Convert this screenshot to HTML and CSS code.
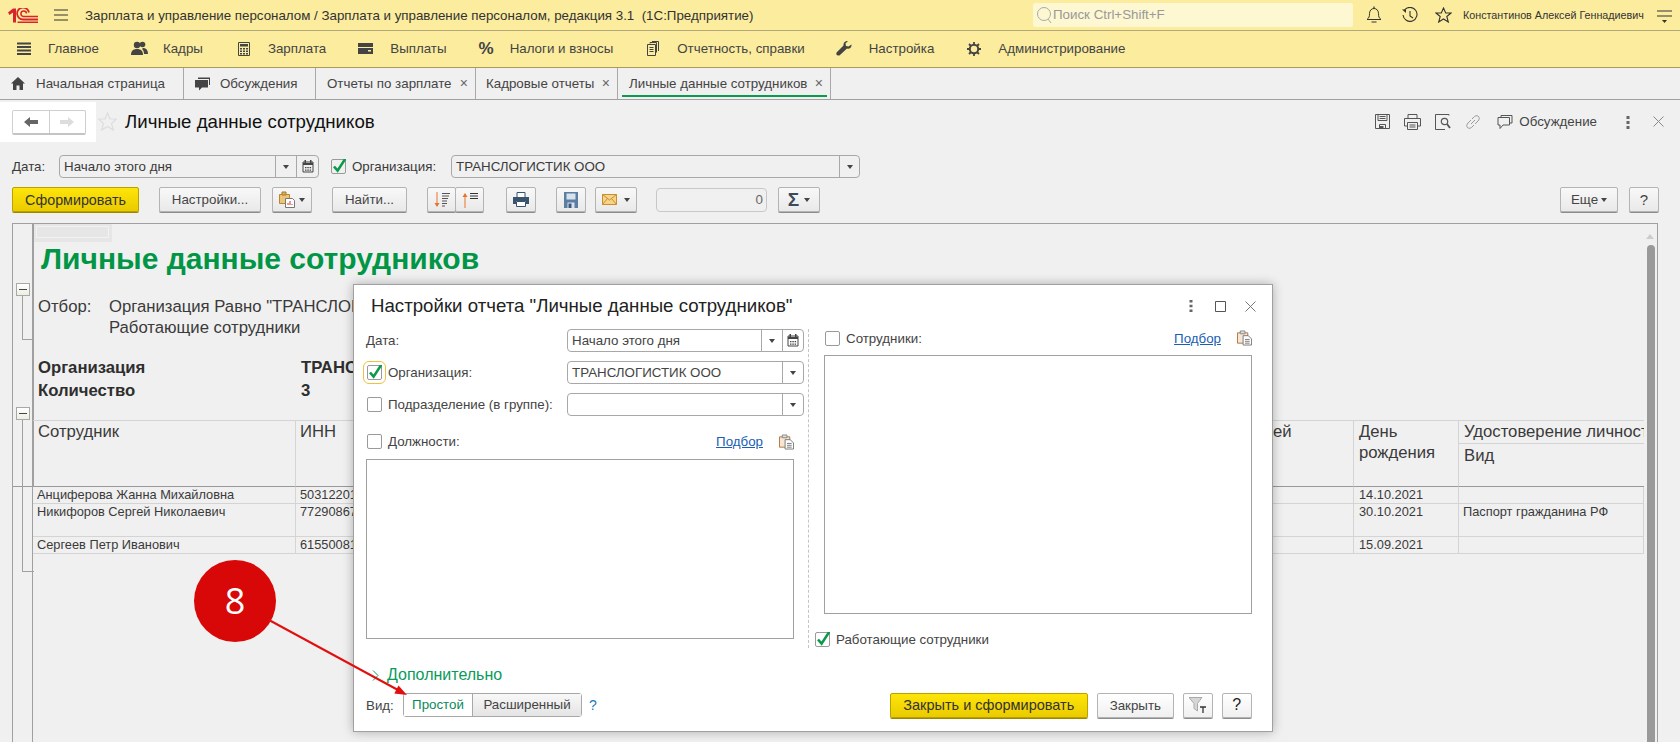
FILE: index.html
```html
<!DOCTYPE html>
<html lang="ru">
<head>
  <meta charset="UTF-8">
  <title>Личные данные сотрудников</title>
  <link rel="stylesheet" href="styles.css">
</head>
<body>
  <svg width="0" height="0" class="defs">
    <symbol id="check" viewBox="0 0 15 15"><path d="M3 7.500l3.600 4.200L14.500-.5" fill="none" stroke="#0a9a4a" stroke-width="2.600"/></symbol>
    <symbol id="clip" viewBox="0 0 16 16"><path d="M.5 2.500h11v11H.500z" fill="#f6e7d4" stroke="#b0703a"/><path d="M3.500 .5h5v3h-5z" fill="#ddd" stroke="#888"/><path d="M6.500 5.500h5.500l3.500 3.500v6.500h-9z" fill="#fff" stroke="#777"/><path d="M8.500 9.500h5M8.500 11.500h5M8.500 13.500h5" stroke="#777"/></symbol>
    <symbol id="chat" viewBox="0 0 16 16"><path d="M4 3V1.500h11V9h-2" fill="none" stroke="currentColor"/><path d="M1 3.500h11.500V11H6l-3 3.500V11H1z" fill="none" stroke="currentColor"/></symbol>
  </svg>

  <header class="topbar">
    <svg class="logo" width="30" height="15" viewBox="0 0 30 15"><path d="M0 4.500L5 .5h3V14.500H5V4.500L1.500 7z" fill="#d8252b"/><path d="M21 4.500A6 6 0 1 0 15 11.500h15" fill="none" stroke="#d8252b" stroke-width="1.800"/><path d="M18.500 5.500A2.800 2.800 0 1 0 15.500 8.500H30M9.500 14.200H30" fill="none" stroke="#d8252b" stroke-width="1.500"/></svg>
    <svg class="burger" width="14" height="12" viewBox="0 0 14 12"><path d="M0 1h14M0 6h14M0 11h14" stroke="#333"/></svg>
    <div class="app-title">Зарплата и управление персоналом / Зарплата и управление персоналом, редакция 3.1&nbsp; (1С:Предприятие)</div>
    <div class="search">
      <svg width="16" height="18" viewBox="0 0 16 18"><circle cx="8" cy="8" r="6.500" fill="none" stroke="#aaa"/><path d="M12 13l3 4" stroke="#aaa"/></svg>
      <span>Поиск Ctrl+Shift+F</span>
    </div>
    <svg class="tool bell" width="16" height="18" viewBox="0 0 16 18"><path d="M1 13.500c2-1.500 2.500-3 2.500-6 0-3 2-5 4.500-5s4.500 2 4.500 5c0 3 .5 4.500 2.500 6z" fill="none" stroke="#333"/><path d="M5.500 16h5M8 .5v2" stroke="#333" stroke-width="1.200"/></svg>
    <svg class="tool hist" width="17" height="16" viewBox="0 0 17 16"><path d="M3.500 3A7 7 0 1 1 2 8" fill="none" stroke="#333" stroke-width="1.100"/><path d="M1 2.500h4v3.500z" fill="#333"/><path d="M9 4v5l3 2" fill="none" stroke="#333" stroke-width="1.100"/></svg>
    <svg class="tool star" width="17" height="16" viewBox="0 0 17 16"><path d="M8.500 1l2.200 5h5.300l-4.200 3.500 1.500 5.500-4.800-3-4.800 3 1.500-5.500L1 6h5.300z" fill="none" stroke="#333" stroke-width="1.100"/></svg>
    <div class="user">Константинов Алексей Геннадиевич</div>
    <svg class="user-menu" width="15" height="14" viewBox="0 0 15 14"><path d="M0 1h15M0 6h15" stroke="#333"/><path d="M5 10h5l-2.500 3z" fill="#333"/></svg>
  </header>

  <nav class="sections">
    <a class="section s1"><svg width="14" height="14" viewBox="0 0 14 14"><path d="M0 1.500h14M0 5h14M0 8.500h14M0 12h14" stroke="#444" stroke-width="1.800"/></svg><span>Главное</span></a>
    <a class="section s2"><svg width="17" height="15" viewBox="0 0 17 15"><circle cx="6" cy="4" r="3.200" fill="#444"/><circle cx="11.500" cy="3.500" r="2.800" fill="#444"/><path d="M0 14c0-4 2-6 6-6s6 2 6 6zM12 7c3 0 5 2 5 6h-4c0-2-.5-4-2-5z" fill="#444"/></svg><span>Кадры</span></a>
    <a class="section s3"><svg width="12" height="14" viewBox="0 0 12 14"><path d="M.5.500h11v13H.500z" fill="none" stroke="#444"/><path d="M2 2h8v2.500H2zM2 6h2v1.500H2zM5 6h2v1.500H5zM8 6h2v1.500H8zM2 8.500h2V10H2zM5 8.500h2V10H5zM8 8.500h2V10H8zM2 11h2v1.500H2zM5 11h2v1.500H5zM8 11h2v1.500H8z" fill="#444"/></svg><span>Зарплата</span></a>
    <a class="section s4"><svg width="15" height="11" viewBox="0 0 15 11"><path d="M0 0h15v4H0zM0 5h15v6H0z" fill="#444"/><path d="M10 7h3v1.500h-3z" fill="#fbec9e"/></svg><span>Выплаты</span></a>
    <a class="section s5"><span class="pct">%</span><span>Налоги и взносы</span></a>
    <a class="section s6"><svg width="12" height="15" viewBox="0 0 12 15"><path d="M.5 3.500h8v11h-8z" fill="none" stroke="#444"/><path d="M3 2.500V1.500h6.500v10M5 .5h6.500V10M2.500 6.500h4M2.500 8.500h4M2.500 10.500h4" fill="none" stroke="#444"/></svg><span>Отчетность, справки</span></a>
    <a class="section s7"><svg width="16" height="15" viewBox="0 0 16 15"><path d="M15.500 3.500c.5 2.500-2 5-4.500 4L4 14c-1 1-3 .5-3.500-.5S.5 11.500 1 11l6.500-6.500C7 2 9.500-.5 12 0L9.500 2.500 10 5l2.500.5z" fill="#444"/></svg><span>Настройка</span></a>
    <a class="section s8"><svg width="14" height="14" viewBox="0 0 14 14"><circle cx="7" cy="7" r="4.200" fill="none" stroke="#444" stroke-width="2"/><path d="M7 0v3M7 11v3M0 7h3M11 7h3M2 2l2 2M10 10l2 2M12 2l-2 2M4 10l-2 2" stroke="#444" stroke-width="1.800"/></svg><span>Администрирование</span></a>
  </nav>

  <div class="tabs">
    <a class="tab t-home"><svg width="14" height="13" viewBox="0 0 14 13"><path d="M7 0l7 6.500h-2V13H8.500V8.500h-3V13H2V6.500H0z" fill="#444"/></svg><span>Начальная страница</span></a>
    <a class="tab t-chat"><svg width="16" height="15" viewBox="0 0 16 15"><path d="M3 1.500h12V9h-1V3H3zM0 4h13v7.500H7l-3 3v-3H0z" fill="#444"/></svg><span>Обсуждения</span></a>
    <a class="tab t-pay"><span>Отчеты по зарплате</span><i class="tab-x">×</i></a>
    <a class="tab t-staff"><span>Кадровые отчеты</span><i class="tab-x">×</i></a>
    <a class="tab t-active"><span>Личные данные сотрудников</span><i class="tab-x">×</i></a>
  </div>

  <main class="form">
    <div class="form-head">
      <div class="nav-patch">
        <div class="nav-btns">
          <span class="nav-btn"><svg width="14" height="10" viewBox="0 0 14 10"><path d="M0 5l6-5v3h8v4H6v3z" fill="#666"/></svg></span>
          <span class="nav-btn"><svg width="14" height="10" viewBox="0 0 14 10"><path d="M14 5L8 0v3H0v4h8v3z" fill="#ddd"/></svg></span>
        </div>
      </div>
      <svg class="fav" width="19" height="19" viewBox="0 0 19 19"><path d="M9.500 1l2.500 6h6.500l-5 4.500 1.800 6.500-5.800-3.600L3.700 18l1.800-6.500-5-4.500H7z" fill="none" stroke="#ddd" stroke-width="1.200"/></svg>
      <h2 class="form-title">Личные данные сотрудников</h2>
      <div class="head-tools">
        <svg width="15" height="15" viewBox="0 0 15 15"><path d="M.5.500h14v14H.5zM3 .5v6h9v-6M4.500 10.500h6v4h-6z" fill="none" stroke="#555"/><path d="M4.500 2.500h6M4.500 4.500h6" stroke="#555"/><path d="M4.500 12h4v2.500h-4z" fill="#555"/></svg>
        <svg width="17" height="16" viewBox="0 0 17 16"><path d="M4 4.500V.5h9v4M3.500 12H.5V4.500h16V12h-3" fill="none" stroke="#555"/><path d="M3.500 8.500h10v7h-10zM5.500 11h6M5.500 13h6" fill="none" stroke="#555"/></svg>
        <svg width="17" height="16" viewBox="0 0 17 16"><path d="M14 1.500V.5H.5v15H10" fill="none" stroke="#555"/><circle cx="9.500" cy="7.500" r="3.200" fill="none" stroke="#555" stroke-width="1.200"/><path d="M12 10l3 4" stroke="#555" stroke-width="1.800"/></svg>
        <svg class="head-link" width="16" height="16" viewBox="0 0 16 16"><path d="M6 6L3 9c-3 3 0 7 3.500 4.500L9 11M10 10l3-3c3-3 0-7-3.500-4.500L7 5M6 10l4-4" fill="none" stroke="#999"/></svg>
        <svg class="head-chat" width="16" height="16"><use href="#chat"/></svg>
        <span class="discuss">Обсуждение</span>
        <svg class="dots" width="4" height="14" viewBox="0 0 4 14"><path d="M.5 1h3v3h-3zM.5 6h3v3h-3zM.5 11h3v3h-3z" fill="#666"/></svg>
        <svg class="close" width="11" height="11" viewBox="0 0 11 11"><path d="M.5.5l10 10M10.500.5l-10 10" stroke="#888"/></svg>
      </div>
    </div>

    <div class="filters">
      <label class="f-label">Дата:</label>
      <div class="field f-date">
        <span class="field-text">Начало этого дня</span>
        <span class="field-btn b-drop"><i class="caret"></i></span>
        <span class="field-btn b-cal"><svg width="12" height="13" viewBox="0 0 12 13"><path d="M1 2h10v10H1z" fill="none" stroke="#444"/><path d="M2.500 0h1.500v3H2.500zM8 0h1.500v3H8zM1 3h10v2H1zM3 7h1.500v1.200H3zM5.300 7h1.500v1.200H5.300zM7.600 7h1.500v1.200H7.600zM3 9.500h1.500v1.200H3zM5.300 9.500h1.500v1.200H5.300zM7.600 9.500h1.500v1.200H7.600z" fill="#444"/></svg></span>
      </div>
      <span class="check f-check"><svg width="15" height="15"><use href="#check"/></svg></span>
      <label class="f-org">Организация:</label>
      <div class="field f-orgfield">
        <span class="field-text">ТРАНСЛОГИСТИК ООО</span>
        <span class="field-btn b-drop2"><i class="caret"></i></span>
      </div>
    </div>

    <div class="toolbar">
      <button class="btn btn-yellow b-make">Сформировать</button>
      <button class="btn b-settings">Настройки...</button>
      <button class="btn b-variant"><svg width="16" height="17" viewBox="0 0 16 17"><path d="M.5 3.500h10v9H.5z" fill="#eac67a" stroke="#b8862f"/><path d="M3 1h4v3H3z" fill="#d9b060" stroke="#a87a26"/><path d="M6.500 7.500h7l2 2v7h-9z" fill="#fff" stroke="#777"/><path d="M9 14v-2M11 14v-4M13 14v-1" stroke="#c33"/></svg><i class="caret"></i></button>
      <button class="btn b-find">Найти...</button>
      <div class="btn-group">
        <button class="btn b-sort"><svg width="16" height="16" viewBox="0 0 16 16"><path d="M3 0v14" stroke="#e8742a"/><path d="M.5 11L3 15l2.500-4z" fill="#e8742a"/><path d="M8 1.500h8M8 4h7M8 6.500h6M8 9h5M8 11.500h5M8 14h3" stroke="#555"/></svg></button>
        <button class="btn b-sort"><svg width="16" height="16" viewBox="0 0 16 16"><path d="M3 2v14" stroke="#e8742a"/><path d="M.5 5L3 1l2.500 4z" fill="#e8742a"/><path d="M8 1.500h8M8 4h8M8 6.500h8" stroke="#333"/></svg></button>
      </div>
      <button class="btn b-print"><svg width="16" height="15" viewBox="0 0 16 15"><path d="M4 5V.5h8V5" fill="#fff" stroke="#37536e"/><path d="M0 5h16v7h-3V9H3v3H0z" fill="#37536e"/><path d="M3.500 9.500h9v5h-9z" fill="#fff" stroke="#37536e"/></svg></button>
      <button class="btn b-save"><svg width="14" height="16" viewBox="0 0 14 16"><path d="M0 0h14v16H0z" fill="#5c7ea3"/><path d="M2.500 1.500h9v6h-9z" fill="#d8e2ec"/><path d="M3.500 10.500h7V16h-7z" fill="#d8e2ec"/><path d="M4.500 11.500h3V16h-3z" fill="#3e5a78"/></svg></button>
      <button class="btn b-mail"><svg width="15" height="11" viewBox="0 0 15 11"><path d="M.5.500h14v10H.5z" fill="#f6d48c" stroke="#c88f2c"/><path d="M.5.500l7 5.500 7-5.500M.5 10.500l5-6M14.500 10.500l-5-6" fill="none" stroke="#c88f2c"/></svg><i class="caret"></i></button>
      <div class="sum-field">0</div>
      <button class="btn b-sigma"><span class="sigma">Σ</span><i class="caret"></i></button>
      <button class="btn b-more">Еще<i class="caret"></i></button>
      <button class="btn b-help">?</button>
    </div>

    <section class="report">
      <div class="gutter">
        <div class="tree tree-a"><span class="tree-box"></span></div>
        <div class="tree tree-b"><span class="tree-box"></span></div>
      </div>
      <div class="sheet">
        <div class="sheet-top">
          <div class="sheet-tag"><span></span></div>
          <h1 class="report-title">Личные данные сотрудников</h1>
          <div class="selection">
            <span class="sel-name">Отбор:</span>
            <div>Организация Равно "ТРАНСЛОГИСТИК ООО"<br>Работающие сотрудники</div>
          </div>
          <div class="summary">
            <b>Организация</b><b>ТРАНСЛОГИСТИК ООО</b>
            <b>Количество</b><b>3</b>
          </div>
        </div>
        <div class="grid">
          <div class="hd">Сотрудник</div>
          <div class="hd">ИНН</div>
          <div class="hd hd-hidden">ей</div>
          <div class="hd hd-day">День<br>рождения</div>
          <div class="hd hd-split"><div class="hd-top">Удостоверение личности</div><div class="hd-sub">Вид</div></div>

          <div class="c">Анциферова Жанна Михайловна</div><div class="c">50312201</div><div class="c"></div><div class="c c-day">14.10.2021</div><div class="c"></div>
          <div class="c">Никифоров Сергей Николаевич</div><div class="c">77290867</div><div class="c"></div><div class="c c-day">30.10.2021</div><div class="c">Паспорт гражданина РФ</div>
          <div class="c">Сергеев Петр Иванович</div><div class="c">61550081</div><div class="c"></div><div class="c c-day">15.09.2021</div><div class="c"></div>
        </div>
      </div>
      <div class="scroll">
        <i class="scroll-up"></i>
        <i class="scroll-thumb"></i>
      </div>
    </section>
  </main>

  <div class="dialog">
    <div class="dlg-head">
      <div class="dlg-title">Настройки отчета "Личные данные сотрудников"</div>
      <svg class="dots" width="4" height="12" viewBox="0 0 4 12"><path d="M.5 0h3v2.500h-3zM.5 4.700h3v2.500h-3zM.5 9.400h3v2.500h-3z" fill="#666"/></svg>
      <svg class="dlg-max" width="11" height="11" viewBox="0 0 11 11"><path d="M.5.500h10v10H.500z" fill="none" stroke="#555"/></svg>
      <svg class="dlg-close" width="11" height="11" viewBox="0 0 11 11"><path d="M.5.5l10 10M10.500.5l-10 10" stroke="#777"/></svg>
    </div>
    <div class="dlg-body">
      <div class="dlg-left">
        <div class="row">
          <label class="row-label">Дата:</label>
          <div class="field d-field">
            <span class="field-text">Начало этого дня</span>
            <span class="field-btn d-drop"><i class="caret"></i></span>
            <span class="field-btn d-cal"><svg width="12" height="13" viewBox="0 0 12 13"><path d="M1 2h10v10H1z" fill="none" stroke="#444"/><path d="M2.500 0h1.500v3H2.500zM8 0h1.500v3H8zM1 3h10v2H1zM3 7h1.500v1.200H3zM5.300 7h1.500v1.200H5.300zM7.600 7h1.500v1.200H7.600zM3 9.500h1.500v1.200H3zM5.300 9.500h1.500v1.200H5.300zM7.600 9.500h1.500v1.200H7.600z" fill="#444"/></svg></span>
          </div>
        </div>
        <div class="row">
          <span class="check check-focus"><svg width="15" height="15"><use href="#check"/></svg></span>
          <label class="row-label2">Организация:</label>
          <div class="field d-field">
            <span class="field-text">ТРАНСЛОГИСТИК ООО</span>
            <span class="field-btn d-drop"><i class="caret"></i></span>
          </div>
        </div>
        <div class="row">
          <span class="check"></span>
          <label class="row-label2">Подразделение (в группе):</label>
          <div class="field d-field">
            <span class="field-text"></span>
            <span class="field-btn d-drop"><i class="caret"></i></span>
          </div>
        </div>
        <div class="row row-list">
          <span class="check"></span>
          <label class="list-label">Должности:</label>
          <a class="pick">Подбор</a>
          <svg class="clip" width="15" height="16"><use href="#clip"/></svg>
        </div>
        <div class="listbox list-left"></div>
      </div>
      <div class="dlg-right">
        <div class="row-right">
          <span class="check"></span>
          <label class="list-label">Сотрудники:</label>
          <a class="pick">Подбор</a>
          <svg class="clip" width="15" height="16"><use href="#clip"/></svg>
        </div>
        <div class="listbox list-right"></div>
        <div class="row-work">
          <span class="check"><svg width="15" height="15"><use href="#check"/></svg></span>
          <label class="row-label2">Работающие сотрудники</label>
        </div>
      </div>
    </div>
    <div class="more">
      <svg width="7" height="11" viewBox="0 0 7 11"><path d="M1 .5l5 5-5 5" fill="none" stroke="#0a9a5a"/></svg>
      <span>Дополнительно</span>
    </div>
    <div class="dlg-foot">
      <label class="view-label">Вид:</label>
      <div class="switch">
        <span class="sw sw-on">Простой</span>
        <span class="sw sw-off">Расширенный</span>
      </div>
      <span class="view-help">?</span>
      <button class="btn btn-yellow b-close-make">Закрыть и сформировать</button>
      <button class="btn b-close">Закрыть</button>
      <button class="btn b-filter"><svg width="18" height="17" viewBox="0 0 18 17"><path d="M0 .5h13L8.500 6.500V14L5 11.500V6.500z" fill="#d6d6d6" stroke="#aaa"/><path d="M11 10h6M14 10v6" stroke="#333" stroke-width="1.300"/></svg></button>
      <button class="btn b-q">?</button>
    </div>
  </div>

  <svg class="callout" width="1680" height="742" viewBox="0 0 1680 742">
    <circle cx="235" cy="601" r="41" fill="#d80808"/>
    <text x="235" y="614" text-anchor="middle" class="callout-num">8</text>
    <path d="M269 620L398 690" stroke="#e01010" stroke-width="2"/>
    <path d="M407 695L398.500 685.400 394.300 693.400z" fill="#e01010"/>
  </svg>
</body>
</html>
```

FILE: styles.css
```css
* {
  box-sizing: border-box;
}
html, body {
  margin: 0;
  height: 742px;
  overflow: hidden;
}
body {
  position: relative;
  background: #f0f0f0;
  color: #3a3a3a;
  font-family: "Liberation Sans", Arial, sans-serif;
  font-size: 13px;
}
svg {
  display: block;
  flex: none;
}
.defs {
  position: absolute;
}
i {
  font-style: normal;
}
.caret {
  display: inline-block;
  width: 0;
  height: 0;
  border: 3px solid transparent;
  border-top: 4px solid #444;
  border-bottom: 0;
}

/* верхняя полоса */
.topbar {
  display: flex;
  align-items: center;
  height: 31px;
  background: #fbec9e;
  border-bottom: 1px solid #b3a878;
}
.logo {
  margin-left: 8px;
}
.burger {
  margin-left: 16px;
}
.app-title {
  margin-left: 17px;
  width: 948px;
  font-size: 13.33px;
  color: #333;
  white-space: nowrap;
}
.search {
  display: flex;
  align-items: center;
  width: 320px;
  height: 24px;
  margin-bottom: 1px;
  padding-left: 3px;
  gap: 1px;
  background: #fdf7d2;
  border-radius: 2px;
  color: #999;
  font-size: 13.33px;
}
.bell {
  margin-left: 13px;
}
.hist {
  margin-left: 19px;
}
.star {
  margin-left: 17px;
}
.user {
  margin-left: 11px;
  width: 194px;
  font-size: 10.75px;
  color: #333;
  white-space: nowrap;
}
.user-menu {
  margin-top: 3px;
}

/* разделы */
.sections {
  display: flex;
  align-items: center;
  height: 37px;
  padding-bottom: 1px;
  background: #fbec9e;
  border-bottom: 1px solid #a89c5c;
  font-size: 13.33px;
  color: #444;
}
.section {
  display: flex;
  align-items: center;
}
.s1 { margin-left: 17px; gap: 17px; }
.s2 { margin-left: 32px; gap: 15px; }
.s3 { margin-left: 35px; gap: 18px; }
.s4 { margin-left: 32px; gap: 17px; }
.s5 { margin-left: 32px; gap: 16px; }
.s6 { margin-left: 34px; gap: 18px; }
.s7 { margin-left: 31px; gap: 17px; }
.s8 { margin-left: 33px; gap: 17px; }
.pct {
  font-size: 17px;
  font-weight: bold;
}

/* вкладки */
.tabs {
  display: flex;
  height: 32px;
  background: #f0f0f0;
  border-bottom: 1px solid #a0a0a0;
  font-size: 13.33px;
  color: #444;
}
.tab {
  position: relative;
  display: flex;
  align-items: center;
  height: 31px;
  border-right: 1px solid #a8a8a8;
  white-space: nowrap;
}
.t-home { width: 184px; padding-left: 11px; gap: 11px; }
.t-chat { width: 132px; padding-left: 11px; gap: 9px; }
.t-pay { width: 160px; padding-left: 11px; }
.t-staff { width: 142px; padding-left: 10px; }
.t-active { width: 213px; padding-left: 11px; }
.tab-x {
  position: absolute;
  right: 7px;
  top: 7px;
  font-size: 14px;
  color: #666;
}
.t-active::after {
  content: "";
  position: absolute;
  left: 4px;
  right: 3px;
  bottom: 2px;
  height: 2px;
  background: #0a9a50;
}

/* форма */
.form {
  padding-bottom: 0;
}
.form-head {
  display: flex;
  align-items: center;
  height: 42px;
  padding-top: 1px;
}
.nav-patch {
  width: 96px;
  height: 40px;
  padding: 8px 0 0 12px;
  background: #fff;
}
.nav-btns {
  display: flex;
  width: 74px;
  height: 25px;
  border: 1px solid #cfcfcf;
  border-bottom: 2px solid #c4c4c4;
  border-radius: 2px;
}
.nav-btn {
  display: flex;
  flex: 1;
  align-items: center;
  justify-content: center;
}
.nav-btn:first-child {
  border-right: 1px solid #cfcfcf;
}
.fav {
  margin-left: 2px;
}
.form-title {
  margin: 0 0 0 8px;
  font-size: 18.67px;
  font-weight: normal;
  color: #111;
}
.head-tools {
  display: flex;
  align-items: center;
  margin-left: auto;
  padding-right: 16px;
  gap: 14px;
}
.head-link {
  margin-left: -1px;
}
.head-chat {
  margin-left: 2px;
  color: #555;
}
.discuss {
  margin-left: -8px;
  font-size: 13.33px;
  color: #444;
}
.dots {
  margin-left: 15px;
}
.close {
  margin-left: 9px;
}

.filters {
  display: flex;
  align-items: center;
  height: 23px;
  margin-top: 13px;
  padding-left: 12px;
  font-size: 13.33px;
}
.f-label {
  width: 47px;
}
.field {
  display: flex;
  align-items: stretch;
  height: 23px;
  border: 1px solid #a8a8a8;
  border-radius: 4px;
}
.field-text {
  flex: 1;
  padding-left: 4px;
  line-height: 21px;
  white-space: nowrap;
}
.field-btn {
  display: flex;
  align-items: center;
  justify-content: center;
  border-left: 1px solid #a8a8a8;
}
.f-date {
  width: 260px;
}
.b-drop { width: 21px; }
.b-cal { width: 22px; }
.b-drop2 { width: 20px; }
.f-check {
  margin-left: 12px;
}
.f-org {
  margin-left: 6px;
  width: 99px;
}
.f-orgfield {
  width: 409px;
}

.check {
  display: block;
  flex: none;
  width: 15px;
  height: 15px;
  background: #fff;
  border: 1px solid #9a9a9a;
  border-radius: 2px;
}
.check svg {
  margin: -1px;
  overflow: visible;
}
.filters .check {
  background: transparent;
}

.toolbar {
  display: flex;
  align-items: flex-start;
  height: 26px;
  margin-top: 9px;
  padding-left: 12px;
  font-size: 13.33px;
}
.btn {
  display: flex;
  flex: none;
  align-items: center;
  justify-content: center;
  gap: 6px;
  height: 25px;
  padding: 0;
  background: linear-gradient(#f8f8f8, #e9e9e9);
  border: 1px solid #b4b4b4;
  border-radius: 2px;
  box-shadow: 0 1px 0 #8c8c8c;
  color: #444;
  font: inherit;
}
.btn-yellow {
  background: linear-gradient(#fde508, #ebcb00);
  border-color: #b8a200;
  box-shadow: 0 1px 0 #9a8800;
  color: #333;
}
.b-make { width: 127px; font-size: 14.3px; }
.b-settings { width: 102px; margin-left: 20px; }
.b-variant { width: 40px; margin-left: 11px; gap: 4px; }
.b-find { width: 75px; margin-left: 20px; }
.btn-group {
  display: flex;
  margin-left: 20px;
}
.b-sort { width: 29px; }
.b-sort + .b-sort { margin-left: -1px; }
.b-print { width: 30px; margin-left: 22px; }
.b-save { width: 30px; margin-left: 20px; }
.b-mail { width: 42px; margin-left: 9px; gap: 7px; }
.sum-field {
  width: 111px;
  height: 24px;
  margin: 1px 0 0 19px;
  padding-right: 3px;
  border: 1px solid #c8c8c8;
  border-radius: 4px;
  line-height: 22px;
  text-align: right;
  color: #666;
}
.b-sigma { width: 42px; margin-left: 11px; gap: 5px; }
.sigma {
  font-size: 19px;
  font-weight: bold;
  color: #3c4a5a;
}
.b-more { width: 58px; margin-left: auto; gap: 3px; }
.b-help { width: 30px; margin: 0 21px 0 11px; font-size: 15px; }

/* отчет */
.report {
  display: flex;
  height: 530px;
  margin: 10px 22px 0 12px;
  border: 1px solid #a0a0a0;
  border-bottom: 0;
}
.gutter {
  flex: none;
  width: 20px;
  padding-top: 59px;
  background: linear-gradient(#999, #999) 0 262px / 100% 1px no-repeat;
  border-right: 1px solid #a0a0a0;
}
.tree {
  width: 10px;
  margin-left: 3px;
  border-left: 0;
}
.tree-box {
  display: block;
  width: 14px;
  height: 13px;
  background: linear-gradient(#fff, #eeeee2);
  border: 1px solid #a8a8a8;
  position: relative;
}
.tree-box::before {
  content: "";
  display: block;
  width: 8px;
  height: 1px;
  margin: 5px 0 0 2px;
  background: #444;
}
.tree::after {
  content: "";
  display: block;
  width: 11px;
  margin-left: 6px;
  border-left: 1px solid #a0a0a0;
  border-bottom: 1px solid #a0a0a0;
}
.tree-a::after {
  height: 43px;
}
.tree-b {
  margin-top: 67px;
}
.tree-b::after {
  height: 151px;
}
.sheet {
  flex: none;
  width: 1611px;
  overflow: hidden;
}
.sheet-top {
  height: 196px;
  border-left: 1px solid #a0a0a0;
}
.sheet-tag {
  width: 78px;
  height: 18px;
  padding: 2px 3px 4px 2px;
  background: #e6e6e6;
}
.sheet-tag span {
  display: block;
  height: 12px;
  width: 73px;
  border: 1px solid #f2f2f2;
}
.report-title {
  margin: 1px 0 0 7px;
  font-size: 30px;
  line-height: 32px;
  font-weight: bold;
  color: #009646;
  white-space: nowrap;
}
.selection {
  display: flex;
  margin: 21px 0 0 4px;
  font-size: 16.7px;
  line-height: 21px;
  white-space: nowrap;
}
.sel-name {
  width: 71px;
}
.summary {
  display: grid;
  grid-template-columns: 263px auto;
  margin: 18px 0 0 4px;
  font-size: 16.7px;
  line-height: 23px;
  color: #2e2e2e;
}
.grid {
  display: grid;
  grid-template-columns: 263px 529px 529px 105px 185px;
  grid-template-rows: 66px 17px 33px 17px;
  border-top: 1px solid #d4d4d4;
}
.hd {
  padding: 0 0 0 4px;
  border-right: 1px solid #d4d4d4;
  border-bottom: 1px solid #999;
  font-size: 16.7px;
  line-height: 21px;
  white-space: nowrap;
}
.hd:first-child {
  border-left: 1px solid #a0a0a0;
}
.hd-hidden {
  padding-left: 448px;
}
.hd-day {
  padding-left: 5px;
}
.hd-split {
  padding: 0;
  border-right: 0;
}
.hd-top {
  height: 23px;
  padding-left: 5px;
  border-bottom: 1px solid #d4d4d4;
}
.hd-sub {
  padding: 1px 0 0 5px;
}
.c {
  padding-left: 4px;
  border-right: 1px solid #d4d4d4;
  border-bottom: 1px solid #d4d4d4;
  font-size: 12.8px;
  line-height: 16px;
  white-space: nowrap;
}
.c-day {
  padding-left: 5px;
}
.scroll {
  flex: 1;
  position: relative;
}
.scroll-up {
  position: absolute;
  left: 2px;
  top: 10px;
  border: 4px solid transparent;
  border-top: 0;
  border-bottom: 5px solid #ccc;
}
.scroll-thumb {
  position: absolute;
  left: 3px;
  top: 21px;
  bottom: 0;
  width: 8px;
  background: #999;
  border-radius: 4px 4px 0 0;
}

/* окно настроек */
.dialog {
  position: absolute;
  left: 353px;
  top: 284px;
  width: 920px;
  height: 448px;
  background: #fff;
  border: 1px solid #a0a0a0;
  box-shadow: 0 0 10px rgba(0, 0, 0, .28);
  font-size: 13.33px;
  color: #444;
}
.dlg-head {
  display: flex;
  align-items: center;
  height: 44px;
  padding: 0 16px 2px 17px;
}
.dlg-title {
  flex: 1;
  font-size: 18.67px;
  color: #222;
  white-space: nowrap;
}
.dlg-head .dots {
  margin: 0 22px 0 0;
}
.dlg-max {
  margin-right: 19px;
}
.dlg-body {
  display: flex;
  height: 319px;
}
.dlg-left {
  width: 454px;
  padding-left: 12px;
}
.row {
  display: flex;
  align-items: center;
  width: 438px;
  height: 23px;
  margin-bottom: 9px;
}
.row > .check {
  margin-left: 1px;
}
.row-label {
  width: 201px;
}
.row-label2 {
  flex: none;
  margin-left: 6px;
  white-space: nowrap;
}
.row .row-label2 {
  width: 179px;
}
.d-field {
  flex: 1;
  background: #fff;
}
.d-drop { width: 21px; }
.d-cal { width: 21px; }
.check-focus {
  outline: 1px solid #f0c040;
  outline-offset: 3px;
}
.row-list {
  width: 428px;
  margin: 14px 0 6px;
}
.list-label {
  flex: 1;
  margin-left: 6px;
}
.pick {
  color: #1a5fb4;
  text-decoration: underline;
}
.clip {
  margin-left: 16px;
}
.listbox {
  border: 1px solid #a0a0a0;
}
.list-left {
  width: 428px;
  height: 180px;
}
.dlg-right {
  flex: none;
  width: 464px;
  padding: 0 0 0 6px;
  border-left: 1px dashed #c4c4c4;
}
.row-right {
  display: flex;
  align-items: center;
  width: 427px;
  height: 18px;
  margin-left: 10px;
}
.list-right {
  width: 428px;
  height: 259px;
  margin: 8px 0 0 9px;
}
.row-work {
  display: flex;
  align-items: center;
  margin-top: 18px;
}
.row-work .check {
  background: transparent;
}
.more {
  display: flex;
  align-items: center;
  height: 22px;
  margin-top: 16px;
  padding-left: 18px;
  gap: 8px;
  font-size: 16px;
  color: #0a9a5a;
}
.dlg-foot {
  display: flex;
  align-items: center;
  height: 26px;
  margin-top: 6px;
  padding-left: 12px;
}
.view-label {
  width: 37px;
}
.switch {
  display: flex;
  width: 179px;
  height: 24px;
  border: 1px solid #a8a8a8;
  border-radius: 3px;
  line-height: 22px;
  text-align: center;
}
.sw-on {
  width: 68px;
  background: #fff;
  color: #0a8a5a;
}
.sw-off {
  flex: 1;
  border-left: 1px solid #a8a8a8;
  background: linear-gradient(#f8f8f8, #e4e4e4);
  color: #444;
}
.view-help {
  margin-left: 7px;
  font-size: 14px;
  color: #1a7ac0;
}
.b-close-make { width: 198px; margin-left: 293px; font-size: 14.5px; }
.b-close { width: 77px; margin-left: 9px; background: linear-gradient(#fff, #f0f0f0); }
.b-filter { width: 30px; margin-left: 9px; background: linear-gradient(#fff, #f0f0f0); }
.b-q { width: 30px; margin-left: 9px; background: linear-gradient(#fff, #f0f0f0); font-size: 16px; color: #222; }

/* выноска */
.callout {
  position: absolute;
  left: 0;
  top: 0;
  pointer-events: none;
}
.callout-num {
  fill: #fff;
  font-family: "Open Sans", "Liberation Sans", sans-serif;
  font-size: 36px;
}
```
